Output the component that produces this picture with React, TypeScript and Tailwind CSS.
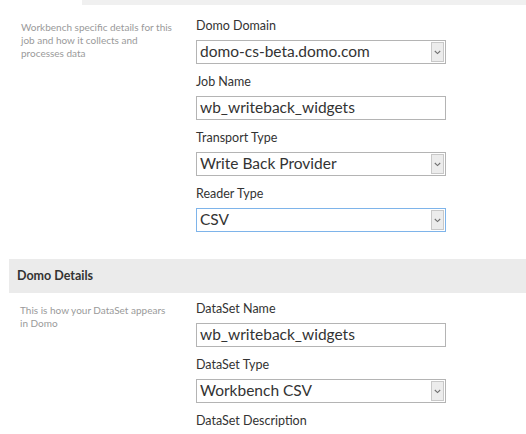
import React from "react";

const font = { fontFamily: 'Lato, "Open Sans", sans-serif' };

function Chevron() {
  return (
    <svg width="7" height="5" viewBox="0 0 7 5" className="block">
      <path d="M0.8 1 L3.5 3.6 L6.2 1" fill="none" stroke="#707070" strokeWidth="1.1" />
    </svg>
  );
}

function SelectBox({ value, focused }: { value: string; focused?: boolean }) {
  return (
    <div
      className={`flex h-[24px] w-[250px] items-stretch border bg-white ${
        focused ? "border-[#7eb4ea]" : "border-[#b4b4b4]"
      }`}
    >
      <div className="flex flex-1 items-center pl-[3px] text-[15.5px] leading-none text-[#333333]">
        {value}
      </div>
      <div className="m-[1px] flex w-[13px] items-center justify-center border border-[#c8c8c8] bg-[#ececec]">
        <Chevron />
      </div>
    </div>
  );
}

function TextBox({ value }: { value: string }) {
  return (
    <div className="flex h-[24px] w-[250px] items-center border border-[#b4b4b4] bg-white pl-[3px] text-[15.5px] leading-none text-[#333333]">
      {value}
    </div>
  );
}

function Field({ label, children }: { label: string; children?: React.ReactNode }) {
  return (
    <div className="flex flex-col">
      <div className="h-[18px] text-[12.5px] leading-[18px] text-[#333333]">{label}</div>
      {children && <div className="mt-[5px] mb-[9px]">{children}</div>}
    </div>
  );
}

export default function App() {
  return (
    <div className="h-[434px] w-[526px] overflow-hidden bg-white" style={font}>
      <div className="flex h-[5px]">
        <div className="w-[82px] bg-white" />
        <div className="flex-1 bg-[#f0f0f0]" />
      </div>

      <div className="flex pt-[12px]">
        <div className="w-[196px] whitespace-nowrap pl-[21px] pt-[4px] text-[10px] leading-[13px] text-[#9a9a9a]">
          <div>Workbench specific details for this</div>
          <div>job and how it collects and</div>
          <div>processes data</div>
        </div>
        <div className="flex flex-col">
          <Field label="Domo Domain">
            <SelectBox value="domo-cs-beta.domo.com" />
          </Field>
          <Field label="Job Name">
            <TextBox value="wb_writeback_widgets" />
          </Field>
          <Field label="Transport Type">
            <SelectBox value="Write Back Provider" />
          </Field>
          <Field label="Reader Type">
            <SelectBox value="CSV" focused />
          </Field>
        </div>
      </div>

      <div className="ml-[9px] mt-[18px] flex h-[34px] items-center bg-[#ebebeb] pl-[8px] text-[12.5px] font-bold text-[#333333]">
        Domo Details
      </div>

      <div className="flex pt-[7px]">
        <div className="w-[196px] whitespace-nowrap pl-[20px] pt-[4px] text-[10px] leading-[13px] text-[#9a9a9a]">
          <div>This is how your DataSet appears</div>
          <div>in Domo</div>
        </div>
        <div className="flex flex-col">
          <Field label="DataSet Name">
            <TextBox value="wb_writeback_widgets" />
          </Field>
          <Field label="DataSet Type">
            <SelectBox value="Workbench CSV" />
          </Field>
          <Field label="DataSet Description" />
        </div>
      </div>
    </div>
  );
}
